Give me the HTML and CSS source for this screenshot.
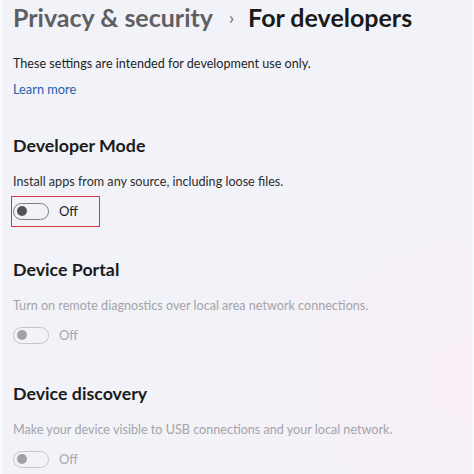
FILE: index.html
```html
<!DOCTYPE html>
<html lang="en">
<head>
<meta charset="utf-8">
<title>For developers</title>
<link rel="stylesheet" href="styles.css">
</head>
<body>
<main class="page">
  <header class="breadcrumb">
    <span class="crumb-parent">Privacy &amp; security</span>
    <span class="crumb-sep">›</span>
    <span class="crumb-current">For developers</span>
  </header>

  <p class="intro">These settings are intended for development use only.</p>
  <a class="link" href="#">Learn more</a>

  <section class="setting first">
    <h2 class="setting-title">Developer Mode</h2>
    <p class="setting-desc">Install apps from any source, including loose files.</p>
    <div class="toggle-row">
      <span class="highlight">
        <span class="toggle"><span class="knob"></span></span>
        <span class="toggle-label">Off</span>
      </span>
    </div>
  </section>

  <section class="setting disabled">
    <h2 class="setting-title">Device Portal</h2>
    <p class="setting-desc">Turn on remote diagnostics over local area network connections.</p>
    <div class="toggle-row">
      <span class="toggle"><span class="knob"></span></span>
      <span class="toggle-label">Off</span>
    </div>
  </section>

  <section class="setting disabled">
    <h2 class="setting-title">Device discovery</h2>
    <p class="setting-desc">Make your device visible to USB connections and your local network.</p>
    <div class="toggle-row">
      <span class="toggle"><span class="knob"></span></span>
      <span class="toggle-label">Off</span>
    </div>
  </section>
</main>
</body>
</html>
```

FILE: styles.css
```css
html, body {
  margin: 0;
  padding: 0;
  height: 100%;
}

body {
  font-family: Lato, "Open Sans", "Liberation Sans", sans-serif;
  background-color: #f1f3f9;
  background-image: radial-gradient(ellipse 70% 60% at 100% 80%, #f8eef6 0%, rgba(248, 238, 246, 0) 100%);
  box-shadow: inset 3px 0 0 #f8f9fc, inset -2px 0 0 #f8f9fc;
  color: #1b1b1b;
  overflow: hidden;
}

.page {
  padding: 0 13px;
}

.breadcrumb {
  display: flex;
  align-items: center;
  height: 34px;
  font-size: 25px;
  font-weight: 700;
  white-space: nowrap;
}

.crumb-parent {
  color: #5f5f63;
}

.crumb-sep {
  color: #6a6a6e;
  font-size: 18px;
  font-weight: 400;
  margin: 0 14px 0 16px;
}

.crumb-current {
  color: #1a1a1a;
}

.intro {
  margin: 20px 0 0;
  line-height: 20px;
  font-size: 12.6px;
  color: #1e1e1e;
}

.link {
  display: block;
  margin-top: 5px;
  line-height: 20px;
  font-size: 12.8px;
  color: #2561ad;
  text-decoration: none;
}

.setting {
  margin-top: 36px;
}

.setting.first {
  margin-top: 34px;
}

.setting-title {
  margin: 0;
  line-height: 24px;
  font-size: 17.8px;
  font-weight: 700;
  color: #1b1b1b;
}

.setting-desc {
  margin: 15px 0 0;
  line-height: 20px;
  font-size: 12.6px;
  color: #2e2e2e;
}

.toggle-row {
  display: flex;
  align-items: center;
  height: 20px;
  margin-top: 9px;
}

.highlight {
  display: flex;
  align-items: center;
  box-sizing: border-box;
  width: 89px;
  height: 31px;
  margin-left: -2px;
  padding-left: 1px;
  border: 1.5px solid #d9343f;
}

.toggle {
  display: flex;
  align-items: center;
  box-sizing: border-box;
  width: 36px;
  height: 17px;
  border: 1px solid #7d7d80;
  border-radius: 9px;
  padding-left: 3px;
}

.knob {
  width: 10px;
  height: 10px;
  border-radius: 50%;
  background: #545458;
}

.toggle-label {
  margin-left: 10px;
  font-size: 13px;
  color: #1e1e1e;
}

.disabled .setting-desc {
  color: #a4a4a8;
}

.disabled .toggle {
  border-color: #c6c6ca;
}

.disabled .knob {
  background: #a2a2a6;
}

.disabled .toggle-label {
  color: #a8a8ac;
}
```
